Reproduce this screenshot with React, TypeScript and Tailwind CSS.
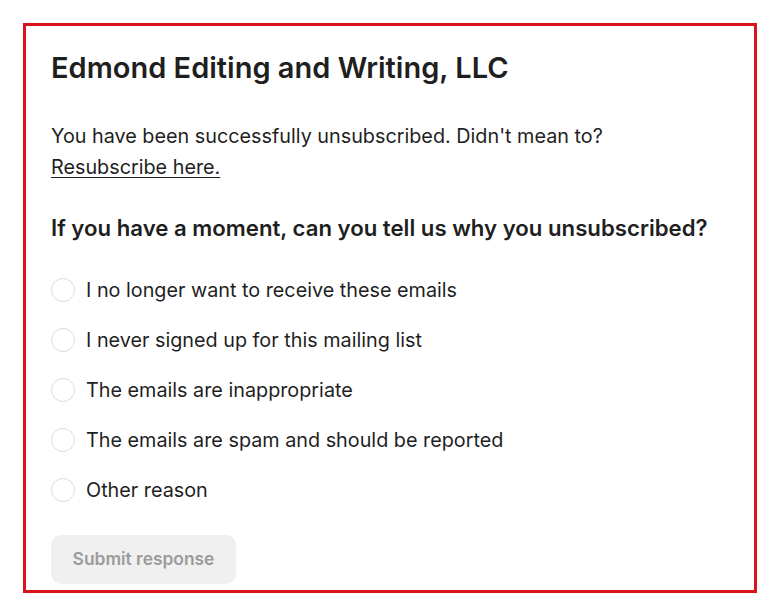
import { useState } from "react"

const reasons = [
  "I no longer want to receive these emails",
  "I never signed up for this mailing list",
  "The emails are inappropriate",
  "The emails are spam and should be reported",
  "Other reason",
]

export default function App() {
  const [picked, setPicked] = useState<number | null>(null)

  return (
    <div className="min-h-screen bg-white p-[23px] font-['Inter',sans-serif] text-[#1f1f1f]">
      <div className="w-[734px] h-[570px] border-[3px] border-[#d8141c] px-[25px] pt-[24px]">
        <h1 className="text-[29px] leading-[36px] font-semibold">Edmond Editing and Writing, LLC</h1>

        <p className="mt-[35px] text-[19.8px] leading-[31px]">
          You have been successfully unsubscribed. Didn't mean to?
          <br />
          <a href="#" className="underline underline-offset-[3px]">
            Resubscribe here.
          </a>
        </p>

        <h2 className="mt-[30px] text-[22.2px] leading-[30px] font-semibold">
          If you have a moment, can you tell us why you unsubscribed?
        </h2>

        <div className="mt-[35px] flex flex-col gap-[26px]">
          {reasons.map((r, i) => (
            <label key={r} className="flex items-center gap-[11px] cursor-pointer">
              <span
                onClick={() => setPicked(i)}
                className="w-[24px] h-[24px] rounded-full border border-[#dcdcdc] bg-white flex items-center justify-center"
              >
                {picked === i && <span className="w-[12px] h-[12px] rounded-full bg-[#1f1f1f]" />}
              </span>
              <span className="text-[19.8px] leading-[24px]">{r}</span>
            </label>
          ))}
        </div>

        <button
          disabled={picked === null}
          className="mt-[33px] w-[185px] h-[49px] rounded-[10px] bg-[#f0f0f0] text-[17.4px] font-semibold text-[#9b9b9b]"
        >
          Submit response
        </button>
      </div>
    </div>
  )
}
